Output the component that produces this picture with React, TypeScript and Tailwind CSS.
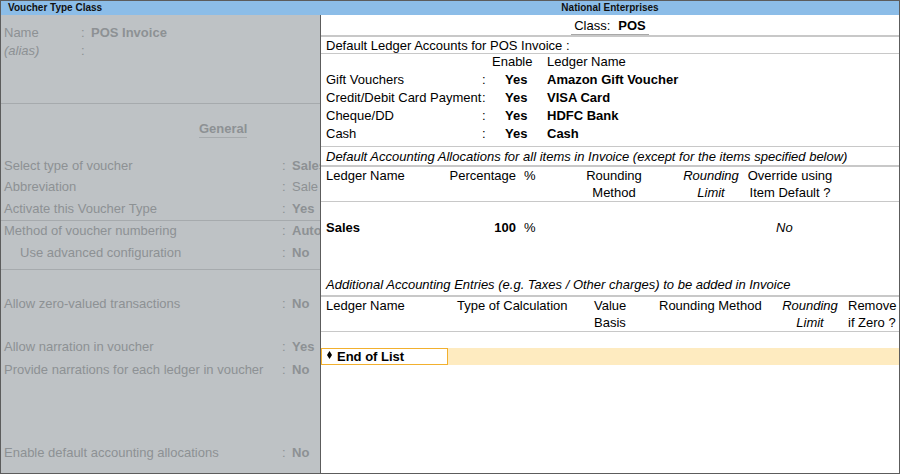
import React from "react";

function LRow({
  label,
  value,
  bold = true,
  h,
  indent = false,
  mt = "",
}: {
  label: string;
  value?: string;
  bold?: boolean;
  h: string;
  indent?: boolean;
  mt?: string;
}) {
  return (
    <div className={`flex whitespace-nowrap leading-[20px] ${h} ${mt}`}>
      <div className={`w-[281px] shrink-0 ${indent ? "pl-[19px]" : "pl-[3px]"}`}>{label}</div>
      <div className="w-[10px] shrink-0">:</div>
      <div className={bold ? "font-bold" : ""}>{value}</div>
    </div>
  );
}

function LedgerRow({ label, ledger }: { label: string; ledger: string }) {
  return (
    <div className="flex h-[18px] leading-[20px] whitespace-nowrap">
      <div className="w-[156px] shrink-0">{label}</div>
      <div className="w-[23px] shrink-0">:</div>
      <div className="w-[42px] shrink-0 font-bold">Yes</div>
      <div className="font-bold">{ledger}</div>
    </div>
  );
}

export default function App() {
  return (
    <div className="w-[900px] h-[474px] border border-[#5c5c5c] flex flex-col bg-white text-[13px] text-black overflow-hidden font-['Liberation_Sans',Arial,sans-serif]">
      {/* Title bar */}
      <div className="h-[14px] shrink-0 flex bg-[#8cbde8] text-[10px] font-bold leading-[14px] text-[#111]">
        <div className="w-[320px] pl-[7px]">Voucher Type Class</div>
        <div className="flex-1 text-center">National Enterprises</div>
      </div>

      <div className="flex flex-1 min-h-0">
        {/* Left panel */}
        <div className="w-[320px] shrink-0 border-r border-[#5c5c5c] bg-[#bec2c5] text-[#8d9194] overflow-hidden flex flex-col">
          <div className="h-[89px] shrink-0 border-b border-[#a6aaad] pt-[8px]">
            <div className="flex h-[18px] leading-[20px] whitespace-nowrap">
              <div className="w-[80px] pl-[3px]">Name</div>
              <div className="w-[10px]">:</div>
              <div className="font-bold">POS Invoice</div>
            </div>
            <div className="flex h-[18px] leading-[20px] whitespace-nowrap italic">
              <div className="w-[80px] pl-[3px]">(alias)</div>
              <div className="w-[10px] not-italic">:</div>
            </div>
          </div>

          <div className="flex pl-[198px] mt-[15px]">
            <div className="font-bold leading-[17px] pt-[1px] border-b border-[#a6aaad]">General</div>
          </div>

          <div className="pt-[18px] border-b border-[#a6aaad]">
            <LRow label="Select type of voucher" value="Sales" h="h-[21px]" />
            <LRow label="Abbreviation" value="Sale" bold={false} h="h-[22px]" />
            <LRow label="Activate this Voucher Type" value="Yes" h="h-[21px]" />
          </div>
          <div className="border-b border-[#a6aaad]">
            <LRow label="Method of voucher numbering" value="Automatic" h="h-[22px]" />
            <LRow label="Use advanced configuration" value="No" h="h-[26px]" indent />
          </div>

          <LRow label="Allow zero-valued transactions" value="No" h="h-[18px]" mt="mt-[24px]" />
          <LRow label="Allow narration in voucher" value="Yes" h="h-[23px]" mt="mt-[25px]" />
          <LRow label="Provide narrations for each ledger in voucher" value="No" h="h-[18px]" />
          <LRow label="Enable default accounting allocations" value="No" h="h-[18px]" mt="mt-[65px]" />
        </div>

        {/* Right panel */}
        <div className="flex-1 flex flex-col min-w-0">
          <div className="h-[22px] shrink-0 border-b-2 border-[#c8c8c8] flex justify-center pt-[1px]">
            <div className="h-[19px] leading-[19px] border-b border-[#a8a8a8] px-[3px] whitespace-nowrap flex">
              <span>Class:</span>
              <span className="ml-[8px] font-bold">POS</span>
            </div>
          </div>

          <div className="h-[17px] shrink-0 border-b border-[#c8c8c8] leading-[17px] pl-[5px] whitespace-nowrap">
            Default Ledger Accounts for POS Invoice :
          </div>

          <div className="h-[93px] shrink-0 border-b border-[#c8c8c8] pl-[5px]">
            <div className="flex h-[16px] leading-[16px] whitespace-nowrap">
              <div className="w-[166px] shrink-0"></div>
              <div className="w-[55px] shrink-0">Enable</div>
              <div>Ledger Name</div>
            </div>
            <LedgerRow label="Gift Vouchers" ledger="Amazon Gift Voucher" />
            <LedgerRow label="Credit/Debit Card Payment" ledger="VISA Card" />
            <LedgerRow label="Cheque/DD" ledger="HDFC Bank" />
            <LedgerRow label="Cash" ledger="Cash" />
          </div>

          <div className="h-[20px] shrink-0 border-b-2 border-[#c8c8c8] pl-[5px] pt-[1px] leading-[18px] italic whitespace-nowrap">
            Default Accounting Allocations for all items in Invoice (except for the items specified below)
          </div>

          <div className="h-[35px] shrink-0 border-b border-[#c8c8c8] pl-[5px] whitespace-nowrap">
            <div className="flex h-[18px] leading-[18px]">
              <div className="w-[123px] shrink-0">Ledger Name</div>
              <div className="w-[67px] shrink-0 text-right">Percentage</div>
              <div className="w-[64px] shrink-0 pl-[8px]">%</div>
              <div className="w-[68px] shrink-0 text-center">Rounding</div>
              <div className="w-[62px] shrink-0 ml-[32px] text-center italic">Rounding</div>
              <div className="w-[96px] shrink-0 text-center">Override using</div>
            </div>
            <div className="flex h-[16px] leading-[16px]">
              <div className="w-[123px] shrink-0"></div>
              <div className="w-[67px] shrink-0"></div>
              <div className="w-[64px] shrink-0"></div>
              <div className="w-[68px] shrink-0 text-center">Method</div>
              <div className="w-[62px] shrink-0 ml-[32px] text-center italic">Limit</div>
              <div className="w-[96px] shrink-0 text-center">Item Default ?</div>
            </div>
          </div>

          <div className="flex h-[18px] leading-[20px] mt-[16px] pl-[5px] whitespace-nowrap shrink-0">
            <div className="w-[123px] shrink-0 font-bold">Sales</div>
            <div className="w-[67px] shrink-0 text-right font-bold">100</div>
            <div className="w-[64px] shrink-0 pl-[8px]">%</div>
            <div className="w-[68px] shrink-0"></div>
            <div className="w-[62px] shrink-0 ml-[32px]"></div>
            <div className="w-[96px] shrink-0 pl-[34px] italic">No</div>
          </div>

          <div className="h-[21px] shrink-0 mt-[40px] border-b-2 border-[#c8c8c8] pl-[5px] leading-[18px] italic whitespace-nowrap">
            Additional Accounting Entries (e.g. Taxes / Other charges) to be added in Invoice
          </div>

          <div className="h-[35px] shrink-0 border-b border-[#c8c8c8] pl-[5px] whitespace-nowrap">
            <div className="flex h-[18px] leading-[18px]">
              <div className="w-[131px] shrink-0">Ledger Name</div>
              <div className="w-[137px] shrink-0">Type of Calculation</div>
              <div className="w-[65px] shrink-0">Value</div>
              <div className="w-[123px] shrink-0">Rounding Method</div>
              <div className="w-[56px] shrink-0 text-center italic">Rounding</div>
              <div className="ml-[10px]">Remove</div>
            </div>
            <div className="flex h-[16px] leading-[16px]">
              <div className="w-[131px] shrink-0"></div>
              <div className="w-[137px] shrink-0"></div>
              <div className="w-[65px] shrink-0">Basis</div>
              <div className="w-[123px] shrink-0"></div>
              <div className="w-[56px] shrink-0 text-center italic">Limit</div>
              <div className="ml-[10px]">if Zero ?</div>
            </div>
          </div>

          <div className="h-[17px] shrink-0 mt-[16px] bg-[#feebc0] flex">
            <div className="w-[127px] h-[17px] border border-[#f2b02e] bg-white flex items-center pl-[5px] whitespace-nowrap">
              <svg width="5" height="8" viewBox="0 0 5 8" className="mr-[5px] mb-[3px]">
                <polygon points="2.5,0 5,4 2.5,8 0,4" fill="#000" />
              </svg>
              <span className="font-bold leading-[15px]">End of List</span>
            </div>
          </div>
        </div>
      </div>
    </div>
  );
}
